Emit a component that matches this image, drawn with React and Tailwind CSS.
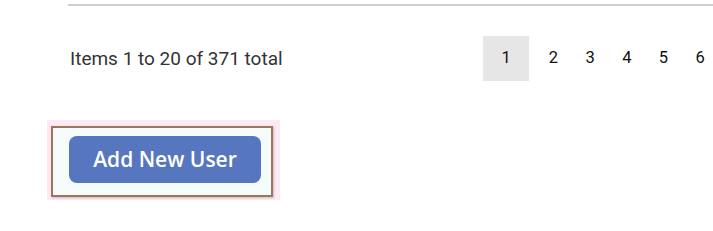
export default function App() {
  const pages = [2, 3, 4, 5, 6];
  return (
    <div className="w-[713px] h-[231px] bg-white overflow-hidden relative">
      <div className="ml-[68px] mt-[4px] h-[2px] bg-[#cfcfcf]" />
      <div className="flex items-center mt-[30px] h-[45px]">
        <div
          className="ml-[70px] text-[19px] text-[#333333] leading-none"
          style={{ fontFamily: "Roboto, sans-serif" }}
        >
          Items 1 to 20 of 371 total
        </div>
        <div
          className="ml-auto mr-[-5.5px] flex items-center text-[16.5px] text-[#111111] shrink-0"
          style={{ fontFamily: "Roboto, sans-serif" }}
        >
          <div className="w-[46px] h-[45px] bg-[#e6e6e6] flex items-center justify-center">1</div>
          <div className="w-[6px]" />
          {pages.map((p) => (
            <div key={p} className="w-[36.7px] h-[45px] flex items-center justify-center">
              {p}
            </div>
          ))}
        </div>
      </div>
      <div className="ml-[47px] mt-[39px] inline-block bg-[#fdeaf6] pt-[6px] pl-[4px] pr-[7px] pb-[3px]">
        <div className="border-2 border-[#a07458] bg-[#f4fbfb] pt-[8px] pl-[16px] pr-[10px] pb-[12px] shadow-[1px_1px_2px_rgba(0,0,0,0.2)]">
          <button
            className="w-[192px] h-[47px] rounded-[8px] bg-[#5677c0] text-white text-[21px] font-semibold flex items-center justify-center"
            style={{ fontFamily: "'Open Sans', sans-serif" }}
          >
            Add New User
          </button>
        </div>
      </div>
    </div>
  );
}
